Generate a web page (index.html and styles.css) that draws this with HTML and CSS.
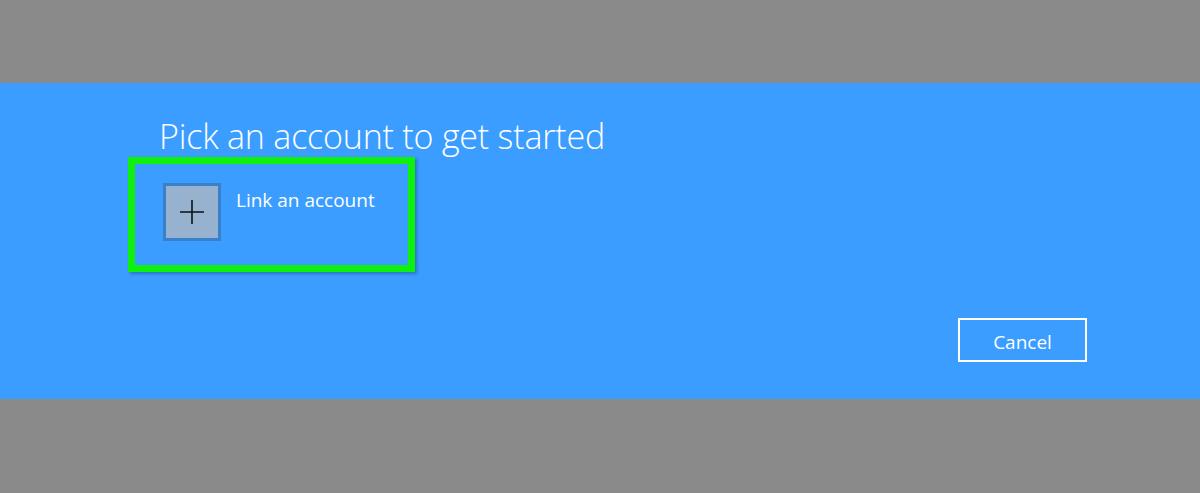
FILE: index.html
```html
<!DOCTYPE html>
<html lang="en">
<head>
<meta charset="utf-8">
<title>Pick an account</title>
<link rel="stylesheet" href="styles.css">
</head>
<body>
<div class="top-band"></div>
<main class="dialog">
  <h1 class="title">Pick an account to get started</h1>
  <div class="highlight">
    <div class="account-item">
      <div class="tile">
        <svg class="plus" width="26" height="26" viewBox="0 0 26 26" aria-hidden="true">
          <path d="M1 13H25M13 1V25" stroke="#111" stroke-width="1.6" fill="none"/>
        </svg>
      </div>
      <span class="item-label">Link an account</span>
    </div>
  </div>
  <div class="actions">
    <button class="cancel">Cancel</button>
  </div>
</main>
<div class="bottom-band"></div>
</body>
</html>
```

FILE: styles.css
```css
html, body {
  margin: 0;
  padding: 0;
  height: 100%;
  background: #8a8a8a;
  font-family: "Open Sans", "Noto Sans", sans-serif;
  overflow: hidden;
}

.top-band {
  height: 83px;
}

.dialog {
  height: 316px;
  background: #3a9dff;
  box-sizing: border-box;
  padding: 31px 0 0 128px;
  display: flex;
  flex-direction: column;
}

.title {
  margin: 0 0 -1px 31px;
  font-weight: 300;
  font-size: 34px;
  line-height: 44px;
  color: #ffffff;
  letter-spacing: -0.2px;
}

.highlight {
  width: 287px;
  height: 115px;
  box-sizing: border-box;
  border: 7px solid #0ef00e;
  box-shadow: 2px 2px 3px rgba(0, 0, 0, 0.25);
}

.account-item {
  display: flex;
  align-items: flex-start;
  padding: 19px 0 0 28px;
  gap: 15px;
}

.tile {
  width: 58px;
  height: 58px;
  box-sizing: border-box;
  background: #96b2cf;
  border: 3px solid #3a80c8;
  display: flex;
  align-items: center;
  justify-content: center;
}

.item-label {
  color: #ffffff;
  font-size: 19px;
  line-height: 22px;
  margin-top: 6px;
}

.actions {
  display: flex;
  justify-content: flex-end;
  padding-right: 113px;
  margin-top: 46px;
}

.cancel {
  width: 129px;
  height: 44px;
  box-sizing: border-box;
  background: transparent;
  border: 2px solid #ffffff;
  color: #ffffff;
  font-family: "Open Sans", "Noto Sans", sans-serif;
  font-size: 19px;
  padding: 4px 0 0;
}
```
